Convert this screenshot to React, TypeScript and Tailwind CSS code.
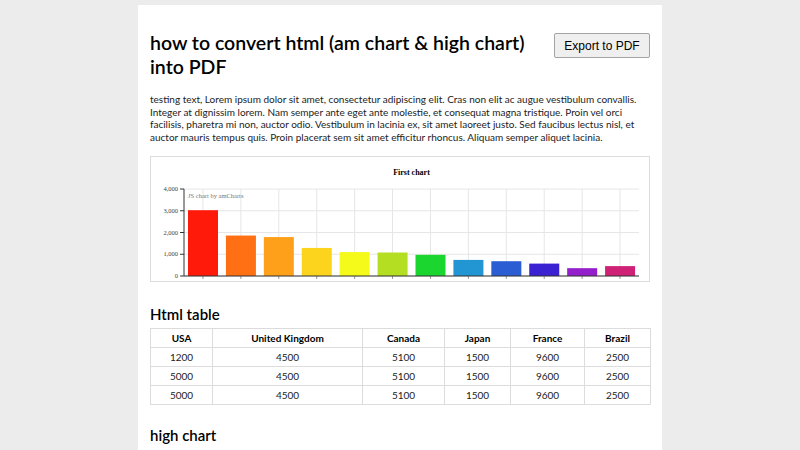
import React from 'react'

const bars = [
  { value: 3025, color: '#FF1A0A' },
  { value: 1860, color: '#FF6F14' },
  { value: 1790, color: '#FFA01A' },
  { value: 1290, color: '#FCD41E' },
  { value: 1100, color: '#F6FA1A' },
  { value: 1080, color: '#B4DE22' },
  { value: 975, color: '#1BD62E' },
  { value: 740, color: '#2295D3' },
  { value: 680, color: '#2A5ED2' },
  { value: 570, color: '#3A21D2' },
  { value: 360, color: '#9420CC' },
  { value: 455, color: '#CF2277' },
]

const headers = ['USA', 'United Kingdom', 'Canada', 'Japan', 'France', 'Brazil']
const colWidths = ['w-[62px]', 'w-[150px]', 'w-[82px]', 'w-[66px]', 'w-[74px]', 'w-[66px]']
const rows = [
  ['1200', '4500', '5100', '1500', '9600', '2500'],
  ['5000', '4500', '5100', '1500', '9600', '2500'],
  ['5000', '4500', '5100', '1500', '9600', '2500'],
]

function AmChart() {
  // plot area inside the svg
  const left = 33
  const right = 488
  const top = 32
  const bottom = 119
  const max = 4000
  const step = (right - left) / bars.length
  const y = (v: number) => bottom - (v / max) * (bottom - top)

  return (
    <div className="w-full border border-[#dcdcdc] bg-white">
      <svg width="500" height="124" viewBox="0 0 500 124" className="block">
        <text
          x={(left + right) / 2}
          y="18"
          textAnchor="middle"
          fontFamily="'Liberation Serif', serif"
          fontWeight="bold"
          fontSize="8"
          fill="#000"
        >
          First chart
        </text>

        {/* horizontal grid + y labels */}
        {[0, 1000, 2000, 3000, 4000].map((v) => (
          <g key={v}>
            <line x1={left} x2={right} y1={y(v)} y2={y(v)} stroke="#e6e6e6" strokeWidth="1" />
            <line x1={left - 4} x2={left} y1={y(v)} y2={y(v)} stroke="#333" strokeWidth="1" />
            <text
              x={left - 6}
              y={y(v) + 2}
              textAnchor="end"
              fontFamily="'Liberation Serif', serif"
              fontSize="6.5"
              fill="#444"
            >
              {v.toLocaleString('en-US')}
            </text>
          </g>
        ))}

        {/* vertical grid through category centers */}
        {bars.map((_, i) => {
          const cx = left + step * i + step / 2
          return (
            <g key={i}>
              <line x1={cx} x2={cx} y1={top} y2={bottom} stroke="#e6e6e6" strokeWidth="1" />
              <line x1={cx} x2={cx} y1={bottom} y2={bottom + 3} stroke="#999" strokeWidth="1" />
            </g>
          )
        })}

        {bars.map((b, i) => {
          const x = left + step * i + 4
          return (
            <rect key={i} x={x} y={y(b.value)} width={30} height={bottom - y(b.value)} fill={b.color} />
          )
        })}

        <line x1={left} x2={left} y1={top} y2={bottom} stroke="#333" strokeWidth="1" />
        <line x1={left} x2={right} y1={bottom} y2={bottom} stroke="#333" strokeWidth="1" />

        <text x={left + 4} y="41" fontFamily="'Liberation Serif', serif" fontSize="6.5" fill="#777">
          JS chart by amCharts
        </text>
      </svg>
    </div>
  )
}

export default function App() {
  return (
    <div className="min-h-[450px] bg-[#ececec] pt-[5px] font-['Lato','Noto_Sans',sans-serif] text-[#111]">
      <div className="mx-auto w-[524px] bg-white px-3 pt-[26px] pb-6">
        {/* Header */}
        <div className="flex items-start justify-between gap-4">
          <h1 className="w-[400px] text-[19.5px] font-semibold leading-[24px] text-black">
            how to convert html (am chart &amp; high chart) into PDF
          </h1>
          <button className="mt-[2px] h-[25px] w-[96px] shrink-0 rounded-[2px] border border-[#a3a3a3] bg-[#efefef] font-['Liberation_Sans',Arial,sans-serif] text-[12px] text-black">
            Export to PDF
          </button>
        </div>

        <p className="mt-[14px] text-[10px] leading-[12.5px] text-[#222]">
          testing text, Lorem ipsum dolor sit amet, consectetur adipiscing elit. Cras non elit ac augue vestibulum
          convallis. Integer at dignissim lorem. Nam semper ante eget ante molestie, et consequat magna tristique. Proin
          vel orci facilisis, pharetra mi non, auctor odio. Vestibulum in lacinia ex, sit amet laoreet justo. Sed
          faucibus lectus nisl, et auctor mauris tempus quis. Proin placerat sem sit amet efficitur rhoncus. Aliquam
          semper aliquet lacinia.
        </p>

        <div className="mt-[13px]">
          <AmChart />
        </div>

        <h2 className="mt-[22px] mb-[4px] text-[15px] font-semibold leading-[20px] text-black">Html table</h2>

        <table className="w-[500px] table-fixed border-collapse text-[10px] text-[#222]">
          <thead>
            <tr className="h-[19px]">
              {headers.map((h, i) => (
                <th key={h} className={`${colWidths[i]} border border-[#dcdcdc] text-center font-bold text-black`}>
                  {h}
                </th>
              ))}
            </tr>
          </thead>
          <tbody>
            {rows.map((r, ri) => (
              <tr key={ri} className="h-[19px]">
                {r.map((c, ci) => (
                  <td key={ci} className="border border-[#dcdcdc] text-center">
                    {c}
                  </td>
                ))}
              </tr>
            ))}
          </tbody>
        </table>

        <h2 className="mt-[20px] text-[15px] font-semibold leading-[20px] text-black">high chart</h2>
      </div>
    </div>
  )
}
